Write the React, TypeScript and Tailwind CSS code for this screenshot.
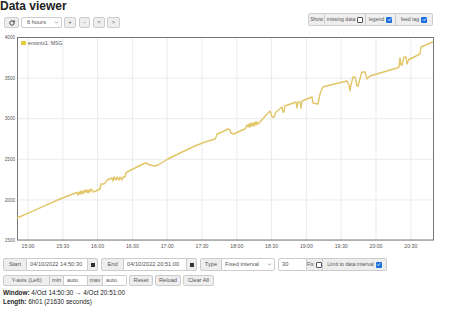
import { RotateCw, ChevronDown } from "lucide-react";

const points =
  "17,219 30,213.3 45,206.7 60,200 70,196 77,193.5 78,196 79,193 80,195 81,192 82,195 83,192 84,194 85,191 86,193 87,191 88,194 89,191 90,193 91,190 92,191 93,193 96,192 100,190 101,185 104,185 106,183 107,181 112,179 113,182 114,178 116,181 117,178 119,181 120,178 122,181 123,178 125,178 126,174 127,173 135,169 143,165 146,164 150,166 155,167 158,166 168,160 180,154 195,147 205,143 215,140 216,138 217,135 222,133 228,130 230,131 231,134 234,135 240,132 245,130 247,126 248,128 249,125 250,128 251,124 252,127 253,124 254,127 255,123 256,126 257,123 258,125 260,123 268,114 270,112 272,118 274,118 276,113 282,108 283,113 284,113 285,107 296,103 297,109 298,103 300,103 301,109 302,102 307,100 312,98 313,104 318,105 320,95 322,90 323,88 330,86 347,82 349,86 350,92 351,86 353,78 355,78 357,87 358,87 361,76 362,73 365,73 367,80 370,77 397,69 399,68 400,59 401,66 402,66 404,58 406,58 407,65 409,60 410,60 420,55 421,48 433,43";

const xTicks = ["15:00", "15:30", "16:00", "16:30", "17:00", "17:30", "18:00", "18:30", "19:00", "19:30", "20:00", "20:30"];
const yTicks = [4000, 3500, 3000, 2500, 2000, 1500];

function Chart() {
  return (
    <svg width={474} height={222} viewBox="0 30 474 222" className="block">
      {xTicks.map((t, i) => {
        const x = 28 + i * 34.8;
        return (
          <g key={t}>
            <line x1={x} y1={38} x2={x} y2={241} stroke="#ebebeb" strokeWidth={1} />
            <text x={x} y={249} fontSize={5.2} fill="#555" textAnchor="middle">
              {t}
            </text>
          </g>
        );
      })}
      {yTicks.map((v, i) => {
        const y = 38.5 + i * 40.6;
        return (
          <g key={v}>
            <line x1={17} y1={y} x2={434} y2={y} stroke="#ebebeb" strokeWidth={1} />
            <text x={15} y={y + 1.7} fontSize={4.6} fill="#555" textAnchor="end">
              {v}
            </text>
          </g>
        );
      })}
      <rect x={17.5} y={38.5} width={416} height={202.5} fill="none" stroke="#777" strokeWidth={1} />
      <polyline points={points} fill="none" stroke="#e1c566" strokeWidth={1.4} strokeLinejoin="round" />
      <rect x={21} y={42} width={5} height={4} fill="#e8c93e" />
      <text x={28} y={45.8} fontSize={5.2} fill="#555">
        emontx1: MSG
      </text>
    </svg>
  );
}

function Check({ on }: { on?: boolean }) {
  if (!on) return <span className="inline-block shrink-0 w-[6px] h-[6px] border border-[#555] bg-white rounded-[1px] ml-[2px]" />;
  return (
    <span className="inline-flex shrink-0 items-center justify-center w-[6px] h-[6px] bg-[#1a6fdc] rounded-[1px] ml-[2px]">
      <svg width="5" height="5" viewBox="0 0 10 10">
        <path d="M2 5.2 L4.2 7.4 L8.2 2.8" fill="none" stroke="white" strokeWidth="1.8" />
      </svg>
    </span>
  );
}

const lbl = "flex items-center justify-center whitespace-nowrap bg-[#eee] border border-[#ccc] text-[#555]";
const inp = "flex items-center whitespace-nowrap bg-white border border-[#ccc] text-[#555] pl-[3px]";

export default function App() {
  return (
    <div className="w-[474px] h-[313px] overflow-hidden bg-white text-[#333] font-['Liberation_Sans',Arial,sans-serif]">
      <h2 className="text-[12px] leading-[12px] font-bold text-[#222]">Data viewer</h2>

      <div className="flex justify-between h-[16px] mt-[1px] pl-[4px] pr-[41px] text-[5.7px]">
        <div className="flex mt-[4px] h-[11px]">
          <button className={`${lbl} w-[15px] rounded-[2px]`}>
            <RotateCw size={6} strokeWidth={3.5} color="#333" />
          </button>
          <div className={`${inp} w-[41px] ml-[2px] rounded-[2px] justify-between pr-[2px] pl-[5px]`}>
            <span>6 hours</span>
            <ChevronDown size={5} strokeWidth={2.5} color="#555" />
          </div>
          <button className={`${lbl} w-[12px] ml-[2px] rounded-[2px]`}>+</button>
          <button className={`${lbl} w-[11px] ml-[3px] rounded-[2px]`}>-</button>
          <button className={`${lbl} w-[12px] ml-[3px] rounded-[2px]`}>&lt;</button>
          <button className={`${lbl} w-[13px] ml-[2px] rounded-[2px]`}>&gt;</button>
        </div>
        <div className="flex h-[13px] text-[5.1px]">
          <span className={`${lbl} w-[17px] rounded-l-[2px]`}>Show</span>
          <span className={`${lbl} w-[41px] border-l-0`}>
            missing data <Check />
          </span>
          <span className={`${lbl} w-[30px] border-l-0`}>
            legend <Check on />
          </span>
          <span className={`${lbl} w-[37px] border-l-0 rounded-r-[2px]`}>
            feed tag <Check on />
          </span>
        </div>
      </div>

      <Chart />

      <div className="flex h-[13px] mt-[7px] pl-[3px] text-[5.7px]">
        <span className={`${lbl} w-[24px] rounded-l-[2px]`}>Start</span>
        <span className={`${inp} w-[61px] border-l-0`}>04/10/2022 14:50:30</span>
        <span className={`${lbl} w-[10px] border-l-0 rounded-r-[2px]`}>
          <span className="w-[4px] h-[4px] bg-[#333]" />
        </span>
        <span className={`${lbl} w-[23px] ml-[3px] rounded-l-[2px]`}>End</span>
        <span className={`${inp} w-[63px] border-l-0`}>04/10/2022 20:51:00</span>
        <span className={`${lbl} w-[10px] border-l-0 rounded-r-[2px]`}>
          <span className="w-[4px] h-[4px] bg-[#333]" />
        </span>
        <span className={`${lbl} w-[22px] ml-[3px] rounded-l-[2px]`}>Type</span>
        <span className={`${inp} w-[53px] border-l-0 justify-between pr-[2px] rounded-r-[2px]`}>
          <span>Fixed interval</span>
          <ChevronDown size={5} strokeWidth={2.5} color="#555" />
        </span>
        <span className={`${inp} w-[29px] ml-[3px] rounded-l-[2px]`}>30</span>
        <span className={`${lbl} w-[16px] border-l-0 text-[5.2px]`}>
          Fix <Check />
        </span>
        <span className={`${lbl} w-[64px] border-l-0 rounded-r-[2px] text-[5.2px]`}>
          Limit to data interval <Check on />
        </span>
      </div>

      <div className="flex h-[11px] mt-[4px] pl-[3px] text-[5.7px]">
        <span className={`${lbl} w-[47px] rounded-l-[2px]`}>Y-axis (Left)</span>
        <span className={`${lbl} w-[14px] border-l-0`}>min</span>
        <span className={`${inp} w-[24px] border-l-0`}>auto</span>
        <span className={`${lbl} w-[15px] border-l-0`}>max</span>
        <span className={`${inp} w-[24px] border-l-0 rounded-r-[2px]`}>auto</span>
        <button className={`${lbl} w-[24px] ml-[2px] rounded-[2px]`}>Reset</button>
        <button className={`${lbl} w-[26px] ml-[2px] rounded-[2px]`}>Reload</button>
        <button className={`${lbl} w-[31px] ml-[2px] rounded-[2px]`}>Clear All</button>
      </div>

      <div className="mt-[2px] pl-[3px] text-[6.4px] leading-[9px] text-[#222]">
        <div>
          <b>Window:</b> 4/Oct 14:50:30 → 4/Oct 20:51:00
        </div>
        <div>
          <b>Length:</b> 6h01 (21630 seconds)
        </div>
      </div>
    </div>
  );
}
